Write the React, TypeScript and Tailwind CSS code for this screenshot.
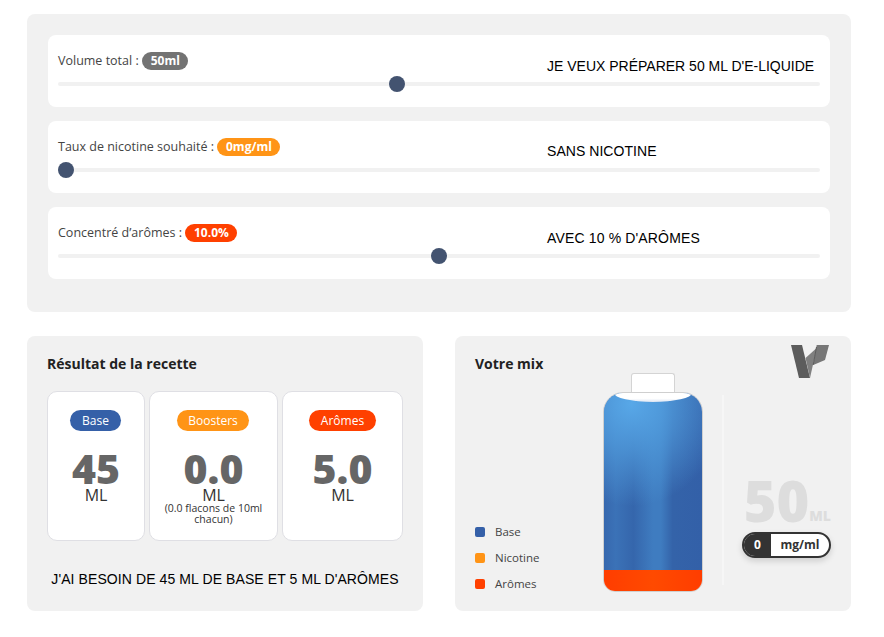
const sans = "font-['Open_Sans','Noto_Sans',sans-serif]";
const arial = "font-['Liberation_Sans',Arial,sans-serif]";

const sliders = [
  { label: "Volume total :", value: "50ml", badge: "bg-[#737373]", text: "JE VEUX PRÉPARER 50 ML D'E-LIQUIDE", pos: "left-[331px]", textClass: "pt-[21px]" },
  { label: "Taux de nicotine souhaité :", value: "0mg/ml", badge: "bg-[#ff9416]", text: "SANS NICOTINE", pos: "left-0", textClass: "pt-[20px] tracking-[0.05px]" },
  { label: "Concentré d’arômes :", value: "10.0%", badge: "bg-[#ff4000]", text: "AVEC 10 % D'ARÔMES", pos: "left-[373px]", textClass: "pt-[21px] tracking-[0.15px]" },
];

const results = [
  { name: "Base", badge: "bg-[#3560a8] w-[51px] mr-[1px]", value: "45", width: "w-[98px]" },
  { name: "Boosters", badge: "bg-[#ff9416] w-[72px] mr-[1px]", value: "0.0", width: "w-[129px]", note: "(0.0 flacons de 10ml chacun)" },
  { name: "Arômes", badge: "bg-[#ff4000] w-[67px]", value: "5.0", width: "w-[121px]" },
];

const legend = [
  { name: "Base", color: "bg-[#3560a8]" },
  { name: "Nicotine", color: "bg-[#ff9416]" },
  { name: "Arômes", color: "bg-[#ff4000]" },
];

function SliderRow({ item }: { item: (typeof sliders)[number] }) {
  return (
    <div className="h-[72px] rounded-lg bg-white px-[10px]">
      <div className="flex h-[47px] items-start">
        <div className="flex w-[489px] items-center gap-[3px] pt-[16px]">
          <span className="text-[12.5px] leading-[20px] font-medium text-[#444]">{item.label}</span>
          <span className={`rounded-full pr-[8px] pl-[9px] text-[12px] leading-[18px] font-bold text-white ${item.badge}`}>{item.value}</span>
        </div>
        <div className={`${arial} ${item.textClass} text-[14px] leading-[20px] text-black`}>{item.text}</div>
      </div>
      <div className="relative h-[4px] rounded-full bg-[#f1f1f1]">
        <div className={`absolute top-[-6px] h-[16px] w-[16px] rounded-full bg-[#435370] ${item.pos}`} />
      </div>
    </div>
  );
}

function ResultCard({ item }: { item: (typeof results)[number] }) {
  return (
    <div className={`flex h-[150px] flex-col items-center rounded-[10px] border border-[#dfdfe4] bg-white pt-[18px] ${item.width}`}>
      <span className={`rounded-full text-center text-[12px] leading-[21px] text-white ${item.badge}`}>{item.name}</span>
      <div className="mt-[19px] text-[41px] leading-[36px] font-extrabold text-[#666]">{item.value}</div>
      <div className="text-[16px] leading-[18px] text-[#333]">ML</div>
      {item.note && <div className="-mt-[1px] w-[115px] text-center text-[10.5px] leading-[11px] text-[#333]">{item.note}</div>}
    </div>
  );
}

function Bottle() {
  return (
    <div className="flex w-[100px] flex-col items-center">
      <div className="h-[19px] w-[44px] rounded-t-[3px] border border-b-0 border-[#d4d4d4] bg-white" />
      <div className="flex h-[200px] w-[100px] flex-col overflow-hidden rounded-b-[12px] rounded-t-[20px] border border-[#cfcfcf] bg-white">
        <div className="flex-1 bg-[radial-gradient(ellipse_95%_58%_at_28%_6%,#58a8e8_0%,rgba(80,155,220,0.75)_45%,rgba(80,155,220,0)_100%),linear-gradient(90deg,#3768ae_0%,#3b72b7_12%,#3566ac_30%,#3f7cc0_50%,#3f7cc0_58%,#3463a9_70%,#3360a8_100%)]">
          <div className="mx-[10px] h-[9px] rounded-b-[50%_100%] bg-gradient-to-b from-white from-60% to-[#dde4f2]" />
        </div>
        <div className="h-[21px] bg-[linear-gradient(90deg,#ff3d00_0%,#ff4a00_50%,#ff3d00_100%)]" />
      </div>
    </div>
  );
}

export default function App() {
  return (
    <div className={`${sans} min-h-[637px] bg-white pt-[14px] pl-[27px]`}>
      <div className="flex h-[298px] w-[824px] flex-col gap-[14px] rounded-lg bg-[#f1f1f1] px-[21px] pt-[21px]">
        {sliders.map((s) => (
          <SliderRow key={s.label} item={s} />
        ))}
      </div>

      <div className="mt-[24px] flex w-[824px] gap-[32px]">
        <div className="h-[275px] w-[396px] rounded-lg bg-[#f1f1f1] px-[20px] pt-[18px]">
          <h2 className="text-[14px] leading-[20px] font-bold text-[#222]">Résultat de la recette</h2>
          <div className="mt-[17px] flex gap-[4px]">
            {results.map((r) => (
              <ResultCard key={r.name} item={r} />
            ))}
          </div>
          <div className={`${arial} mt-[28px] text-center text-[14px] leading-[20px] tracking-[0.09px] text-black`}>
            J'AI BESOIN DE 45 ML DE BASE ET 5 ML D'ARÔMES
          </div>
        </div>

        <div className="relative flex h-[275px] w-[396px] rounded-lg bg-[#f1f1f1] pl-[20px]">
          <svg className="absolute right-[21px] top-[9px]" width="39" height="34" viewBox="0 0 39 34">
            <path d="M0 0H11L19 33H8Z" fill="#5c5c5c" />
            <path d="M14.5 13L25.7 3L19 33Z" fill="#808080" />
            <path d="M25.7 0H38L34 15L22.3 20Z" fill="#777777" />
            <path d="M25.5 2L22.2 20" stroke="#5c5c5c" strokeWidth="1" fill="none" />
          </svg>
          <div className="flex w-[128px] flex-col pt-[18px]">
            <h2 className="text-[14px] leading-[20px] font-bold text-[#222]">Votre mix</h2>
            <div className="mt-[153px] flex flex-col gap-[16px]">
              {legend.map((l) => (
                <div key={l.name} className="flex h-[10px] items-center gap-[10px] text-[11.5px] text-[#444]">
                  <span className={`h-[10px] w-[10px] rounded-[2px] ${l.color}`} />
                  {l.name}
                </div>
              ))}
            </div>
          </div>
          <div className="pt-[37px]">
            <Bottle />
          </div>
          <div className="mt-[59px] mb-[26px] ml-[19px] w-[2px] bg-[#f6f6f6]" />
          <div className="flex flex-col items-end pt-[136px] pl-[18px]">
            <div className="flex w-[89px] items-end justify-end">
              <span className="text-[56px] leading-[56px] font-extrabold text-[#dddddd]">50</span>
              <span className="mb-[4px] text-[14px] leading-[16px] font-extrabold text-[#dddddd]">ML</span>
            </div>
            <div className="mt-[4px] flex h-[26px] w-[89px] overflow-hidden rounded-full border-2 border-[#333] bg-white text-[12px] leading-[22px] font-bold shadow-[0_3px_6px_rgba(0,0,0,0.15)]">
              <span className="w-[27px] bg-[#333] text-center text-white">0</span>
              <span className="flex-1 text-center text-[#333]">mg/ml</span>
            </div>
          </div>
        </div>
      </div>
    </div>
  );
}
